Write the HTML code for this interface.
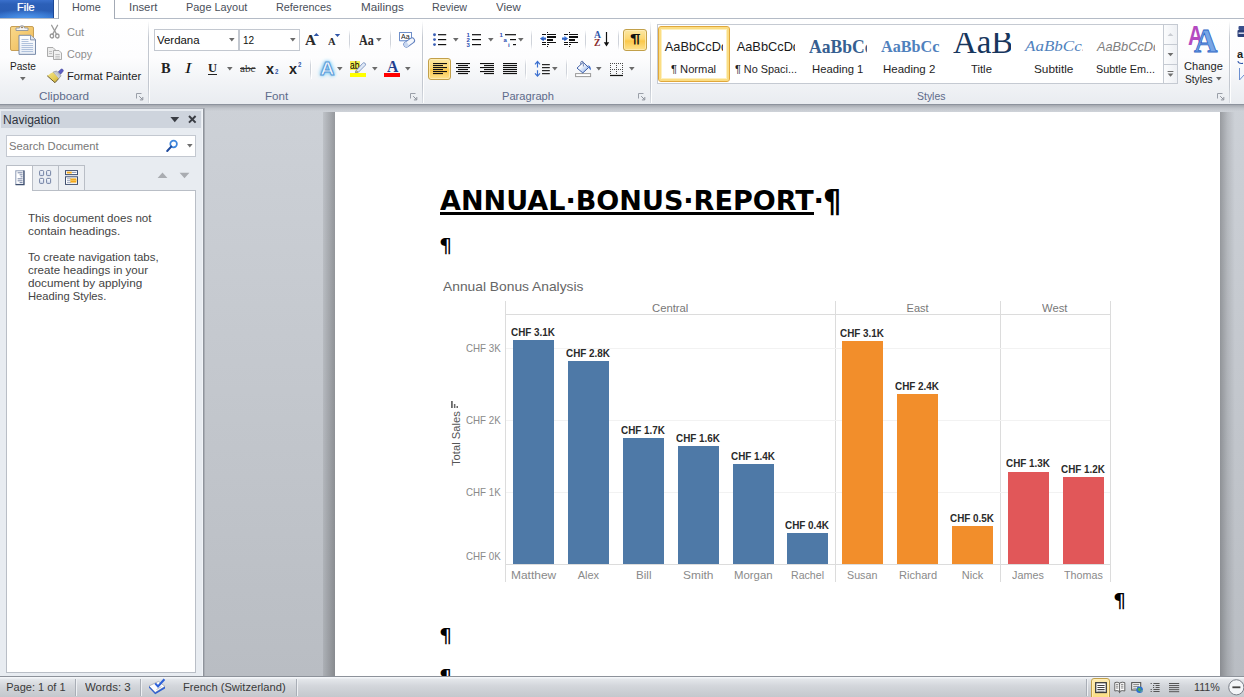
<!DOCTYPE html>
<html lang="en"><head><meta charset="utf-8"><title>Annual Bonus Report - Microsoft Word</title>
<style>
html,body{margin:0;padding:0;}
body{width:1244px;height:697px;overflow:hidden;position:relative;background:#fff;font-family:"Liberation Sans",sans-serif;font-size:12px;}
.t{position:absolute;white-space:pre;line-height:1;transform-origin:0 0;}
.a{position:absolute;}
svg{position:absolute;overflow:visible;}
#tabs{left:0;top:0;width:1244px;height:19px;background:#fff;}
#ribbon{left:0;top:19px;width:1244px;height:85px;background:linear-gradient(#ffffff 0%,#fdfdfe 45%,#f1f3f6 75%,#e9ecf0 100%);border-bottom:1px solid #8d939d;}
#gap{left:0;top:105px;width:1244px;height:6px;background:linear-gradient(#a4a8af 0,#bfc3c9 3px,rgba(204,208,214,0) 6px);}
#work{left:0;top:105px;width:1244px;height:571px;background:linear-gradient(#cdd1d7,#b9bdc3);}
#nav{left:0;top:108px;width:203px;height:568px;background:#e8ecf1;border-top:1px solid #aeb3bb;border-right:1px solid #8f949c;box-sizing:content-box;box-shadow:inset -1px 0 0 #f1f4f8, 1px 0 0 #a9adb4;}
#page{left:335px;top:112px;width:885px;height:564px;background:#fff;}
#status{left:0;top:676px;width:1244px;height:21px;background:linear-gradient(#f4f6f9 0,#f4f6f9 1px,#e4e7eb 2px,#d3d6db 9px,#c4c8cd 100%);border-top:1px solid #8d929a;box-sizing:border-box;}
.gsep{width:1px;top:21px;height:82px;background:linear-gradient(rgba(190,196,205,0),#c3c8d0 20%,#c3c8d0 80%,rgba(190,196,205,.4));box-shadow:1px 0 0 rgba(255,255,255,.9);}
.bsep{width:1px;height:20px;background:linear-gradient(rgba(200,204,212,0),#cfd3da 30%,#cfd3da 70%,rgba(200,204,212,0));box-shadow:1px 0 0 #fff;}
.hot{border:1px solid #c2a04a;border-radius:3px;background:linear-gradient(#fbe7a4 0,#fdd770 45%,#fbc84b 55%,#fde28e 100%);box-sizing:border-box;box-shadow:inset 0 0 0 1px rgba(255,240,190,.7);}
.arr{width:0;height:0;border-left:3px solid transparent;border-right:3px solid transparent;border-top:3.5px solid #6e6e6e;}
.ssep{width:1px;top:679px;height:17px;background:#a9aeb6;box-shadow:1px 0 0 #eef0f3;}
</style></head><body>

<div id="tabs" class="a">
<div class="a" style="left:0;top:18px;width:1244px;height:1px;background:#b4bbc6"></div>
<div class="a" style="left:0;top:0;width:53px;height:18px;background:radial-gradient(ellipse 65% 55% at 50% 105%,#4f98ee 0,rgba(79,152,238,0) 100%),linear-gradient(#3a70cc 0,#2c60b8 22%,#2a5db4 60%,#3473cf 100%);border-right:1px solid #1d4896;"></div>
<div class="a" style="left:58px;top:-4px;width:55px;height:23px;background:#fff;border:1px solid #a3aab5;border-bottom:none;border-radius:3px 3px 0 0;box-sizing:content-box"></div>
</div>
<span class="t" style="left:17.0px;top:1.9px;font-size:11px;color:#fff;text-shadow:0 0 .7px rgba(255,255,255,.85);">File</span>
<span class="t" style="left:71.6px;top:2.0px;font-size:11px;color:#4a4f5a;transform:scaleX(0.981);">Home</span>
<span class="t" style="left:129.2px;top:2.0px;font-size:11px;color:#4a4f5a;transform:scaleX(1.029);">Insert</span>
<span class="t" style="left:186.4px;top:2.0px;font-size:11px;color:#4a4f5a;transform:scaleX(0.991);">Page Layout</span>
<span class="t" style="left:276.2px;top:2.0px;font-size:11px;color:#4a4f5a;transform:scaleX(0.985);">References</span>
<span class="t" style="left:360.6px;top:2.0px;font-size:11px;color:#4a4f5a;transform:scaleX(1.060);">Mailings</span>
<span class="t" style="left:432.4px;top:2.0px;font-size:11px;color:#4a4f5a;transform:scaleX(0.973);">Review</span>
<span class="t" style="left:496.3px;top:2.0px;font-size:11px;color:#4a4f5a;transform:scaleX(1.044);">View</span>
<div id="ribbon" class="a"></div>
<div class="a gsep" style="left:147.5px"></div>
<div class="a gsep" style="left:422px"></div>
<div class="a gsep" style="left:650px"></div>
<div class="a gsep" style="left:1229px"></div>
<span class="t" style="left:38.7px;top:91.2px;font-size:11px;color:#5d6b8a;transform:scaleX(1.064);">Clipboard</span>
<span class="t" style="left:264.8px;top:91.2px;font-size:11px;color:#5d6b8a;transform:scaleX(1.054);">Font</span>
<span class="t" style="left:501.6px;top:91.2px;font-size:11px;color:#5d6b8a;transform:scaleX(1.012);">Paragraph</span>
<span class="t" style="left:916.5px;top:91.2px;font-size:11px;color:#5d6b8a;transform:scaleX(0.951);">Styles</span>
<span class="t" style="left:9.7px;top:60.6px;font-size:11px;color:#1e1e1e;transform:scaleX(0.917);">Paste</span>
<span class="t" style="left:66.7px;top:27.0px;font-size:11px;color:#8e8e8e;transform:scaleX(1.004);">Cut</span>
<span class="t" style="left:66.7px;top:49.0px;font-size:11px;color:#8e8e8e;transform:scaleX(0.981);">Copy</span>
<span class="t" style="left:66.5px;top:70.8px;font-size:11px;color:#1e1e1e;transform:scaleX(1.020);">Format Painter</span>
<div class="a" style="left:154px;top:29px;width:85px;height:22px;border:1px solid #c3c8d0;box-sizing:border-box;background:#fff"></div>
<div class="a" style="left:239px;top:29px;width:61px;height:22px;border:1px solid #c3c8d0;border-left:1px solid #c3c8d0;box-sizing:border-box;background:#fff"></div>
<span class="t" style="left:156.8px;top:34.5px;font-size:11px;color:#111;transform:scaleX(1.039);">Verdana</span>
<span class="t" style="left:242.9px;top:34.5px;font-size:11px;color:#111;transform:scaleX(0.914);">12</span>
<svg style="left:9px;top:23px" width="28" height="32" viewBox="0 0 28 32">
<defs><linearGradient id="pb" x1="0" y1="0" x2="1" y2="1"><stop offset="0" stop-color="#f9d98c"/><stop offset="1" stop-color="#eeb955"/></linearGradient>
<linearGradient id="pp" x1="0" y1="0" x2="0" y2="1"><stop offset="0" stop-color="#ffffff"/><stop offset="1" stop-color="#e6ecf5"/></linearGradient></defs>
<rect x="1.5" y="3.5" width="23" height="24" rx="1.5" fill="url(#pb)" stroke="#c79f56"/>
<path d="M7 7.5 v-2.5 h3.5 a2.5 2.3 0 0 1 5 0 h3.5 v2.5 z" fill="#f4f5f7" stroke="#8e949d" stroke-width=".9"/>
<circle cx="13" cy="4.3" r=".9" fill="#8a6a3a"/>
<path d="M10 12.5 h11.5 l5 5 v18 h-16.5 z" transform="scale(1 .83) translate(0 2.3)" fill="url(#pp)" stroke="#6f82a3" stroke-width="1"/>
<path d="M21.5 12.3 v4.6 h5" fill="#dfe6f0" stroke="#6f82a3" stroke-width=".8"/>
<g stroke="#a8bbd8" stroke-width=".9"><path d="M12.5 16.5h7M12.5 18.5h7M12.5 20.5h11.5M12.5 22.5h11.5M12.5 24.5h11.5M12.5 26.5h11.5M12.5 28.5h11.5"/></g>
</svg>
<svg style="left:49px;top:24px" width="12" height="16" viewBox="0 0 12 16">
<g fill="none" stroke="#9a9a9a" stroke-width="1.3" stroke-linecap="round">
<path d="M2.6 1.2 L7.6 10.4"/><path d="M8.6 1.2 L3.6 10.4"/>
<ellipse cx="2.9" cy="12" rx="1.7" ry="2" /><ellipse cx="8.3" cy="12" rx="1.7" ry="2"/></g>
</svg>
<svg style="left:46px;top:46px" width="18" height="15" viewBox="0 0 18 15">
<g stroke="#a3a3a3" stroke-width=".9" fill="#ececec">
<path d="M1.5 1.5 h5.5 l2.5 2.5 v6.5 h-8 z"/>
<path d="M7.5 4.5 h5.5 l2.5 2.5 v6.5 h-8 z" fill="#f2f2f2"/></g>
<g stroke="#b5b5b5" stroke-width=".8"><path d="M3 5.5h3M3 7.5h3M9.3 8.5h4.5M9.3 10.3h4.5M9.3 12h4.5"/></g>
</svg>
<svg style="left:46px;top:68px" width="18" height="16" viewBox="0 0 18 16">
<defs><linearGradient id="fb" x1="0" y1="0" x2="1" y2="1"><stop offset="0" stop-color="#f3e48a"/><stop offset=".6" stop-color="#e4cc55"/><stop offset="1" stop-color="#c9a93a"/></linearGradient></defs>
<path d="M12.2 4 L14.9 1.3 a1.5 1.5 0 0 1 2.2 1.9 L14.6 6.2 z" fill="#5a5cc4" stroke="#3c3e93" stroke-width=".6"/>
<path d="M7 4.2 L10.6 3 L15 7.8 L12.6 10.6 z" fill="#d5d8de" stroke="#80858f" stroke-width=".7"/>
<path d="M8.6 3.9 L13.8 9.2 M9.8 3.4 L14.6 8.4" stroke="#9aa0ab" stroke-width=".5"/>
<path d="M1.2 7.6 Q3 6.8 4.4 5.4 L7 4.3 L12.6 10.6 L9 14.6 Z" fill="url(#fb)"/>
<path d="M1.2 7.8 L9 14.7 L12.7 10.6" fill="none" stroke="#5a4a1a" stroke-width=".9"/>
</svg>
<svg style="left:20px;top:77.2px" width="6" height="4" viewBox="0 0 6 4"><path d="M0 0 H5.6 L2.8 3.4z" fill="#6a6a6a"/></svg>
<svg style="left:229px;top:38px" width="6" height="4" viewBox="0 0 6 4"><path d="M0 0 H5.6 L2.8 3.4z" fill="#6a6a6a"/></svg>
<svg style="left:290px;top:38px" width="6" height="4" viewBox="0 0 6 4"><path d="M0 0 H5.6 L2.8 3.4z" fill="#6a6a6a"/></svg>
<span class="t" style="left:305.0px;top:32.2px;font-size:15.5px;color:#2b2b2b;font-family:'Liberation Serif', serif;font-weight:700;transform:scaleX(0.982);">A</span>
<svg style="left:313px;top:32px" width="7" height="5" viewBox="0 0 7 5"><path d="M.6 3.9 L3.4 .9 L6.2 3.9z" fill="#2f55a8"/></svg>
<span class="t" style="left:328.0px;top:36.0px;font-size:11px;color:#2b2b2b;font-family:'Liberation Serif', serif;font-weight:700;transform:scaleX(0.956);">A</span>
<svg style="left:334px;top:33px" width="7" height="5" viewBox="0 0 7 5"><path d="M.8 1.1 L6.2 1.1 L3.5 4z" fill="#2f55a8"/></svg>
<div class="a bsep" style="left:349px;top:30px"></div>
<span class="t" style="left:358.6px;top:32.2px;font-size:15.5px;color:#2b2b2b;font-family:'Liberation Serif', serif;font-weight:700;transform:scaleX(0.776);">Aa</span>
<svg style="left:376px;top:38px" width="6" height="4" viewBox="0 0 6 4"><path d="M0 0 H5.6 L2.8 3.4z" fill="#6a6a6a"/></svg>
<div class="a bsep" style="left:390px;top:30px"></div>
<svg style="left:398px;top:31px" width="19" height="18" viewBox="0 0 19 18">
<rect x="1.5" y="1.5" width="12" height="8" fill="#fff" stroke="#6f8fc9" stroke-width="1"/>
<path d="M1.5 9.5 h12 v1 h-12z" fill="#9db7e3"/>
<g transform="translate(11.2 11.5) rotate(-36)"><rect x="-6" y="-2.6" width="12" height="5.2" rx="2.6" fill="#f4f7fc" stroke="#5f7fbf" stroke-width="1"/><path d="M-6 -.2 a2.6 2.6 0 0 0 2.6 2.8 h1.6 v-5.2 h-1.6 a2.6 2.6 0 0 0 -2.6 2.4z" fill="#c8d7f0"/></g>
</svg>
<span class="t" style="left:401.3px;top:32.5px;font-size:8px;color:#222;transform:scaleX(0.878);">Aa</span>
<span class="t" style="left:160.8px;top:61.1px;font-size:14.5px;color:#222;font-family:'Liberation Serif', serif;font-weight:700;transform:scaleX(0.993);">B</span>
<span class="t" style="left:185.2px;top:61.1px;font-size:14.5px;color:#111;font-family:'Liberation Serif', serif;font-style:italic;transform:scaleX(1.321);">I</span>
<span class="t" style="left:207.8px;top:61.3px;font-size:13.5px;color:#222;font-family:'Liberation Serif', serif;font-weight:700;transform:scaleX(0.923);">U</span>
<div class="a" style="left:208px;top:74px;width:9px;height:1px;background:#222"></div>
<svg style="left:227px;top:67px" width="6" height="4" viewBox="0 0 6 4"><path d="M0 0 H5.6 L2.8 3.4z" fill="#6a6a6a"/></svg>
<span class="t" style="left:240.0px;top:63.4px;font-size:11px;color:#333;font-family:'Liberation Serif', serif;transform:scaleX(1.022);text-decoration:line-through;">abc</span>
<span class="t" style="left:266.0px;top:60.5px;font-size:15px;color:#222;font-weight:700;transform:scaleX(0.959);">x</span>
<span class="t" style="left:275.0px;top:69.0px;font-size:6.5px;color:#2f55a8;font-weight:700;transform:scaleX(0.938);">2</span>
<span class="t" style="left:288.8px;top:60.5px;font-size:15px;color:#222;font-weight:700;transform:scaleX(0.959);">x</span>
<span class="t" style="left:297.8px;top:61.5px;font-size:6.5px;color:#2f55a8;font-weight:700;transform:scaleX(0.938);">2</span>
<div class="a bsep" style="left:310px;top:59px"></div>
<span class="t" style="left:319.6px;top:59.2px;font-size:19px;font-weight:700;color:#f2f8fe;-webkit-text-stroke:.9px #5b9ad8;text-shadow:0 0 2px #6fc0f0,0 0 3px #7cc6f2,0 0 4px #8fd3f7,0 0 5px #9ad8f8;transform:scaleX(1.06)">A</span>
<svg style="left:337px;top:67px" width="6" height="4" viewBox="0 0 6 4"><path d="M0 0 H5.6 L2.8 3.4z" fill="#6a6a6a"/></svg>
<div class="a" style="left:350px;top:61px;width:10px;height:9px;background:#f5ef52"></div>
<span class="t" style="left:350.3px;top:60.5px;font-size:10px;color:#000;transform:scaleX(0.845);">ab</span>
<svg style="left:353px;top:61px" width="14" height="12" viewBox="0 0 14 12">
<path d="M3 9.6 L9.6 2.4 a1.6 1.6 0 0 1 2.6 2 L5.4 11.2 L2.4 11.6z" fill="#dfe8f6" stroke="#6b86b8" stroke-width=".8"/>
<path d="M2.6 11.5 L3.2 9.7 L5.2 11z" fill="#e9d89a" stroke="#8a7a40" stroke-width=".5"/></svg>
<div class="a" style="left:350px;top:73px;width:16px;height:4px;background:#ffff00"></div>
<svg style="left:372px;top:67px" width="6" height="4" viewBox="0 0 6 4"><path d="M0 0 H5.6 L2.8 3.4z" fill="#6a6a6a"/></svg>
<span class="t" style="left:386.6px;top:58.6px;font-size:16px;color:#1f3f8f;font-family:'Liberation Serif', serif;font-weight:700;transform:scaleX(0.986);">A</span>
<div class="a" style="left:384px;top:73px;width:16px;height:4px;background:#ff0000"></div>
<svg style="left:405px;top:67px" width="6" height="4" viewBox="0 0 6 4"><path d="M0 0 H5.6 L2.8 3.4z" fill="#6a6a6a"/></svg>
<svg style="left:432px;top:32px" width="16" height="15" viewBox="0 0 16 15">
<g fill="#3a5fb5"><circle cx="2.5" cy="2.7" r="1.45"/><circle cx="2.5" cy="7.6" r="1.45"/><circle cx="2.5" cy="12.6" r="1.45"/></g>
<g fill="#111"><rect x="6" y="2.1" width="8.2" height="1.2"/><rect x="6" y="7" width="8.2" height="1.2"/><rect x="6" y="12" width="8.2" height="1.2"/></g></svg>
<svg style="left:453px;top:38px" width="6" height="4" viewBox="0 0 6 4"><path d="M0 0 H5.6 L2.8 3.4z" fill="#6a6a6a"/></svg>
<svg style="left:466px;top:32px" width="16" height="15" viewBox="0 0 16 15">
<g font-family="Liberation Sans, sans-serif" font-weight="700" font-size="6" fill="#2a4db0"><text x=".6" y="4.6">1</text><text x=".6" y="9.6">2</text><text x=".6" y="14.6">3</text></g>
<g fill="#111"><rect x="6" y="2.1" width="9" height="1.2"/><rect x="6" y="7" width="9" height="1.2"/><rect x="6" y="12" width="9" height="1.2"/></g></svg>
<svg style="left:488px;top:38px" width="6" height="4" viewBox="0 0 6 4"><path d="M0 0 H5.6 L2.8 3.4z" fill="#6a6a6a"/></svg>
<svg style="left:499px;top:32px" width="18" height="16" viewBox="0 0 18 16">
<g font-family="Liberation Sans, sans-serif" font-weight="700" font-size="6" fill="#2a4db0"><text x=".6" y="4.8">1</text><text x="4.6" y="9.6">a</text><text x="9" y="14.8">i</text></g>
<g fill="#111"><rect x="6" y="2.1" width="11" height="1.2"/><rect x="11" y="7" width="6" height="1.2"/><rect x="14" y="12" width="3" height="1.2"/></g></svg>
<svg style="left:518px;top:38px" width="6" height="4" viewBox="0 0 6 4"><path d="M0 0 H5.6 L2.8 3.4z" fill="#6a6a6a"/></svg>
<div class="a bsep" style="left:531px;top:30px"></div>
<svg style="left:540px;top:32px" width="17" height="15" viewBox="0 0 17 15">
<g fill="#111"><rect x="7" y="0" width="1" height="1"/><rect x="7" y="14" width="1" height="1"/>
<rect x="2" y="2" width="4" height="1"/><rect x="7" y="2" width="9" height="1"/>
<rect x="7" y="4" width="9" height="2"/><rect x="7" y="7" width="6" height="2"/>
<rect x="2" y="10" width="4" height="1"/><rect x="7" y="10" width="9" height="1"/>
<rect x="2" y="12" width="4" height="1"/><rect x="7" y="12" width="2" height="1"/></g>
<path d="M0 6.5 L3.6 3.9 V5.6 H6 V7.4 H3.6 V9.1z" fill="#3f7be0"/><path d="M0 6.5 L3.6 9.1 V7.4 H6 V6.5z" fill="#2a55b0"/></svg>
<svg style="left:562px;top:32px" width="17" height="15" viewBox="0 0 17 15">
<g fill="#111"><rect x="7" y="0" width="1" height="1"/><rect x="7" y="14" width="1" height="1"/>
<rect x="2" y="2" width="4" height="1"/><rect x="7" y="2" width="9" height="1"/>
<rect x="7" y="4" width="9" height="2"/><rect x="7" y="7" width="6" height="2"/>
<rect x="2" y="10" width="4" height="1"/><rect x="7" y="10" width="9" height="1"/>
<rect x="2" y="12" width="4" height="1"/><rect x="7" y="12" width="2" height="1"/></g>
<path d="M6 6.5 L2.4 3.9 V5.6 H0 V7.4 H2.4 V9.1z" fill="#3f7be0"/><path d="M6 6.5 L2.4 9.1 V7.4 H0 V6.5z" fill="#2a55b0"/></svg>
<div class="a bsep" style="left:585px;top:30px"></div>
<span class="t" style="left:594.0px;top:30.7px;font-size:9.5px;color:#2f55a8;font-family:'Liberation Serif', serif;font-weight:700;transform:scaleX(1.018);">A</span>
<span class="t" style="left:594.4px;top:38.8px;font-size:9.5px;color:#8b2c2c;font-family:'Liberation Serif', serif;font-weight:700;transform:scaleX(1.009);">Z</span>
<svg style="left:603px;top:31px" width="8" height="17" viewBox="0 0 8 17"><path d="M3.5 1 v13" stroke="#111" stroke-width="1.2"/><path d="M.8 11.2 L3.5 15.4 L6.2 11.2z" fill="#111"/></svg>
<div class="a bsep" style="left:618px;top:30px"></div>
<div class="a hot" style="left:623px;top:29px;width:24px;height:22px"></div>
<span class="t" style="left:629.6px;top:32.2px;font-size:13.5px;color:#111;font-weight:700;transform:scaleX(1.410);">¶</span>
<div class="a hot" style="left:428px;top:58px;width:23px;height:22px"></div>
<svg style="left:433px;top:62px" width="14" height="13" viewBox="0 0 14 13"><g fill="#111"><rect x="0" y="1" width="14" height="1.1"/><rect x="0" y="3" width="10" height="1.1"/><rect x="0" y="5" width="14" height="1.1"/><rect x="0" y="7" width="10" height="1.1"/><rect x="0" y="9" width="14" height="1.1"/><rect x="0" y="11" width="10" height="1.1"/></g></svg>
<svg style="left:456px;top:62px" width="14" height="13" viewBox="0 0 14 13"><g fill="#111"><rect x="0" y="1" width="14" height="1.1"/><rect x="2" y="3" width="10" height="1.1"/><rect x="0" y="5" width="14" height="1.1"/><rect x="2" y="7" width="10" height="1.1"/><rect x="0" y="9" width="14" height="1.1"/><rect x="2" y="11" width="10" height="1.1"/></g></svg>
<svg style="left:480px;top:62px" width="14" height="13" viewBox="0 0 14 13"><g fill="#111"><rect x="0" y="1" width="14" height="1.1"/><rect x="4" y="3" width="10" height="1.1"/><rect x="0" y="5" width="14" height="1.1"/><rect x="4" y="7" width="10" height="1.1"/><rect x="0" y="9" width="14" height="1.1"/><rect x="4" y="11" width="10" height="1.1"/></g></svg>
<svg style="left:503px;top:62px" width="14" height="13" viewBox="0 0 14 13"><g fill="#111"><rect x="0" y="1" width="14" height="1.1"/><rect x="0" y="3" width="14" height="1.1"/><rect x="0" y="5" width="14" height="1.1"/><rect x="0" y="7" width="14" height="1.1"/><rect x="0" y="9" width="14" height="1.1"/><rect x="0" y="11" width="14" height="1.1"/></g></svg>
<div class="a bsep" style="left:525px;top:59px"></div>
<svg style="left:534px;top:60px" width="17" height="18" viewBox="0 0 17 18">
<g fill="none" stroke="#3a6fd0" stroke-width="1.2"><path d="M3.5 1.8 v5.6 M3.5 10.2 v5.6"/><path d="M1 4.3 L3.5 1.5 L6 4.3"/><path d="M1 13.3 L3.5 16.1 L6 13.3"/></g>
<g fill="#111"><rect x="8" y="4.1" width="7.8" height="1.1"/><rect x="8" y="7.1" width="7.8" height="1.1"/><rect x="8" y="10.1" width="7.8" height="1.1"/><rect x="8" y="13.1" width="7.8" height="1.1"/></g></svg>
<svg style="left:552px;top:67px" width="6" height="4" viewBox="0 0 6 4"><path d="M0 0 H5.6 L2.8 3.4z" fill="#6a6a6a"/></svg>
<div class="a bsep" style="left:566px;top:59px"></div>
<svg style="left:574px;top:60px" width="19" height="18" viewBox="0 0 19 18">
<defs><linearGradient id="bk" x1="0" y1="0" x2="1" y2="1"><stop offset=".35" stop-color="#ffffff"/><stop offset="1" stop-color="#7fa6e6"/></linearGradient></defs>
<rect x="1.6" y="13.6" width="15" height="3" fill="#fff" stroke="#9a9a9a" stroke-width="1"/>
<path d="M9.2 2.3 L14.6 7.5 L8.8 12.9 L3 8.1z" fill="url(#bk)" stroke="#2b4f9f" stroke-width=".9"/>
<path d="M6.6 4.6 Q6.4 .9 8.2 1 Q9.6 1.2 9.4 6.4" fill="none" stroke="#5f76a8" stroke-width=".9"/>
<path d="M13.6 5.2 Q17.2 5.6 16.8 10.2 Q14.8 9 15 7z" fill="#2f60c8"/></svg>
<svg style="left:596px;top:67px" width="6" height="4" viewBox="0 0 6 4"><path d="M0 0 H5.6 L2.8 3.4z" fill="#6a6a6a"/></svg>
<svg style="left:609px;top:62px" width="16" height="15" viewBox="0 0 16 15"><g fill="#4a4a4a"><rect x="1" y="1" width="1" height="1"/><rect x="1" y="3" width="1" height="1"/><rect x="1" y="5" width="1" height="1"/><rect x="1" y="7" width="1" height="1"/><rect x="1" y="9" width="1" height="1"/><rect x="1" y="11" width="1" height="1"/><rect x="3" y="1" width="1" height="1"/><rect x="3" y="7" width="1" height="1"/><rect x="5" y="1" width="1" height="1"/><rect x="5" y="7" width="1" height="1"/><rect x="7" y="1" width="1" height="1"/><rect x="7" y="3" width="1" height="1"/><rect x="7" y="5" width="1" height="1"/><rect x="7" y="7" width="1" height="1"/><rect x="7" y="9" width="1" height="1"/><rect x="7" y="11" width="1" height="1"/><rect x="9" y="1" width="1" height="1"/><rect x="9" y="7" width="1" height="1"/><rect x="11" y="1" width="1" height="1"/><rect x="11" y="7" width="1" height="1"/><rect x="13" y="1" width="1" height="1"/><rect x="13" y="3" width="1" height="1"/><rect x="13" y="5" width="1" height="1"/><rect x="13" y="7" width="1" height="1"/><rect x="13" y="9" width="1" height="1"/><rect x="13" y="11" width="1" height="1"/></g><rect x="1" y="12.9" width="13" height="1.2" fill="#111"/></svg>
<svg style="left:629px;top:67px" width="6" height="4" viewBox="0 0 6 4"><path d="M0 0 H5.6 L2.8 3.4z" fill="#6a6a6a"/></svg>
<svg style="left:136px;top:93px" width="8" height="8" viewBox="0 0 8 8"><path d="M.5 5.5 v-5 h5" fill="none" stroke="#9a9fa8" stroke-width="1"/><path d="M3.2 3.2 L6.6 6.6 M6.8 4 v2.9 h-2.9" fill="none" stroke="#8d929b" stroke-width="1"/></svg>
<svg style="left:410px;top:93px" width="8" height="8" viewBox="0 0 8 8"><path d="M.5 5.5 v-5 h5" fill="none" stroke="#9a9fa8" stroke-width="1"/><path d="M3.2 3.2 L6.6 6.6 M6.8 4 v2.9 h-2.9" fill="none" stroke="#8d929b" stroke-width="1"/></svg>
<svg style="left:638px;top:93px" width="8" height="8" viewBox="0 0 8 8"><path d="M.5 5.5 v-5 h5" fill="none" stroke="#9a9fa8" stroke-width="1"/><path d="M3.2 3.2 L6.6 6.6 M6.8 4 v2.9 h-2.9" fill="none" stroke="#8d929b" stroke-width="1"/></svg>
<svg style="left:1217px;top:93px" width="8" height="8" viewBox="0 0 8 8"><path d="M.5 5.5 v-5 h5" fill="none" stroke="#9a9fa8" stroke-width="1"/><path d="M3.2 3.2 L6.6 6.6 M6.8 4 v2.9 h-2.9" fill="none" stroke="#8d929b" stroke-width="1"/></svg>
<div class="a" style="left:657px;top:24px;width:521px;height:60px;border:1px solid #c5cad2;box-sizing:border-box;background:#fff"></div>
<div class="a" style="left:658px;top:26px;width:72px;height:56px;border-radius:3px;border:1px solid #e0a83c;box-sizing:border-box;background:#fff;box-shadow:inset 0 0 0 2px #fbdd83, inset 0 0 0 3px #fdf0c0"></div>
<div class="a" style="left:662px;top:30px;width:61.2px;height:30px;overflow:hidden">
<span class="t" style="left:2.8px;top:11.0px;font-size:12.8px;color:#1a1a1a;">AaBbCcDd</span>
</div>
<span class="t" style="left:670.7px;top:64.2px;font-size:11px;color:#1e1e1e;transform:scaleX(1.015);">¶ Normal</span>
<div class="a" style="left:734px;top:30px;width:61.4px;height:30px;overflow:hidden">
<span class="t" style="left:2.7px;top:11.0px;font-size:12.8px;color:#1a1a1a;">AaBbCcDd</span>
</div>
<span class="t" style="left:734.5px;top:64.2px;font-size:11px;color:#1e1e1e;transform:scaleX(0.988);">¶ No Spaci...</span>
<div class="a" style="left:806px;top:30px;width:61.2px;height:30px;overflow:hidden">
<span class="t" style="left:3.0px;top:6.7px;font-size:19px;color:#365f91;font-family:'Liberation Serif', serif;font-weight:700;transform:scaleX(0.925);">AaBbCc</span>
</div>
<span class="t" style="left:811.5px;top:64.2px;font-size:11px;color:#1e1e1e;transform:scaleX(1.023);">Heading 1</span>
<div class="a" style="left:878px;top:30px;width:62px;height:30px;overflow:hidden">
<span class="t" style="left:2.8px;top:9.3px;font-size:16px;color:#4f81bd;font-family:'Liberation Serif', serif;font-weight:700;transform:scaleX(1.011);">AaBbCc</span>
</div>
<span class="t" style="left:883.4px;top:64.2px;font-size:11px;color:#1e1e1e;transform:scaleX(1.043);">Heading 2</span>
<div class="a" style="left:950px;top:33px;width:60.6px;height:27px;overflow:hidden">
<span class="t" style="left:3.0px;top:-8.5px;font-size:33.5px;color:#17365d;font-family:'Liberation Serif', serif;transform:scaleX(0.979);">AaBb</span>
</div>
<span class="t" style="left:971.0px;top:64.2px;font-size:11px;color:#1e1e1e;transform:scaleX(1.026);">Title</span>
<div class="a" style="left:1022px;top:30px;width:61.2px;height:30px;overflow:hidden">
<span class="t" style="left:2.5px;top:9.1px;font-size:15px;color:#4f81bd;font-family:'Liberation Serif', serif;font-style:italic;transform:scaleX(1.135);">AaBbCc.</span>
</div>
<span class="t" style="left:1034.2px;top:64.2px;font-size:11px;color:#1e1e1e;transform:scaleX(1.073);">Subtitle</span>
<div class="a" style="left:1094px;top:30px;width:61.2px;height:30px;overflow:hidden">
<span class="t" style="left:2.9px;top:11.0px;font-size:12.8px;color:#808080;font-style:italic;">AaBbCcDd</span>
</div>
<span class="t" style="left:1096.4px;top:64.2px;font-size:11px;color:#1e1e1e;transform:scaleX(0.985);">Subtle Em...</span>
<div class="a" style="left:1163px;top:24px;width:15px;height:60px;box-sizing:border-box;border:1px solid #c5cad2;background:linear-gradient(90deg,#fbfcfd,#eef0f4)"></div>
<div class="a" style="left:1163px;top:44px;width:15px;height:1px;background:#c5cad2"></div>
<div class="a" style="left:1163px;top:64px;width:15px;height:1px;background:#c5cad2"></div>
<svg style="left:1167px;top:32px" width="7" height="5" viewBox="0 0 7 5"><path d="M.6 4 L3.5 1 L6.4 4z" fill="#c9ccd2"/></svg>
<svg style="left:1167px;top:52px" width="7" height="5" viewBox="0 0 7 5"><path d="M.6 1 L6.4 1 L3.5 4.2z" fill="#6e6e6e"/></svg>
<svg style="left:1167px;top:70px" width="7" height="8" viewBox="0 0 7 8"><path d="M.6 1.5 h5.8" stroke="#6e6e6e" stroke-width="1"/><path d="M.6 3.6 L6.4 3.6 L3.5 6.8z" fill="#6e6e6e"/></svg>
<span class="t" style="left:1187.5px;top:22.9px;font-size:27px;color:#b44ac0;font-weight:700;transform:scaleX(0.769);">A</span>
<span class="t" style="left:1194.0px;top:24.3px;font-size:34px;color:#77a6e6;font-family:'Liberation Serif', serif;font-weight:700;transform:scaleX(0.957);-webkit-text-stroke:.8px #2f66c6;">A</span>
<span class="t" style="left:1183.8px;top:61.4px;font-size:11px;color:#1e1e1e;transform:scaleX(1.007);">Change</span>
<span class="t" style="left:1184.5px;top:73.7px;font-size:11px;color:#1e1e1e;transform:scaleX(0.924);">Styles</span>
<svg style="left:1216px;top:76.8px" width="6" height="4" viewBox="0 0 6 4"><path d="M0 0 H5.6 L2.8 3.4z" fill="#6a6a6a"/></svg>
<svg style="left:1236px;top:24px" width="8" height="60" viewBox="0 0 8 60">
<rect x="2.5" y="2" width="6" height="4" rx="1" fill="#3a4f8c"/><rect x="1.5" y="6" width="7" height="7" rx="1" fill="#2c3f78"/><rect x="2.5" y="8.5" width="6" height="1.4" fill="#dfe6f5"/>
<text x="1" y="34" font-family="Liberation Sans, sans-serif" font-size="11" font-weight="700" fill="#222">a</text>
<path d="M2 37 q0 3 5 2.4" fill="none" stroke="#2f55a8" stroke-width="1.1"/>
<path d="M3.5 44 v12 L8 51" fill="#f4f7fc" stroke="#6b8fd0" stroke-width="1"/></svg>
<div id="work" class="a"></div>
<div id="gap" class="a"></div>
<div class="a" style="left:323px;top:112px;width:12px;height:564px;background:linear-gradient(90deg,rgba(0,0,0,.07),rgba(0,0,0,.27))"></div>
<div class="a" style="left:1220px;top:112px;width:15px;height:564px;background:linear-gradient(90deg,rgba(0,0,0,.26),rgba(0,0,0,.1) 50%,rgba(0,0,0,0))"></div>
<div id="page" class="a"></div>
<span class="t" style="left:440.3px;top:186.8px;font-size:27.4px;color:#000;font-family:'DejaVu Sans', 'Liberation Sans', sans-serif;font-weight:700;transform:scaleX(0.987);">ANNUAL·BONUS·REPORT</span>
<div class="a" style="left:440px;top:212px;width:374px;height:3px;background:#000"></div>
<span class="t" style="left:813.4px;top:186.8px;font-size:27.4px;color:#000;font-family:'DejaVu Sans', 'Liberation Sans', sans-serif;font-weight:700;">·</span>
<span class="t" style="left:823.2px;top:186.4px;font-size:31.1px;color:#000;font-family:'DejaVu Sans', 'Liberation Sans', sans-serif;font-weight:700;transform:scaleX(0.924);">¶</span>
<span class="t" style="left:439.4px;top:237.2px;font-size:18.8px;color:#000;font-family:'DejaVu Sans', 'Liberation Sans', sans-serif;transform:scaleX(1.104);">¶</span>
<span class="t" style="left:1113.1px;top:592.2px;font-size:18.8px;color:#000;font-family:'DejaVu Sans', 'Liberation Sans', sans-serif;transform:scaleX(1.104);">¶</span>
<span class="t" style="left:439.4px;top:627.4px;font-size:18.8px;color:#000;font-family:'DejaVu Sans', 'Liberation Sans', sans-serif;transform:scaleX(1.104);">¶</span>
<span class="t" style="left:439.4px;top:667.5px;font-size:18.8px;color:#000;font-family:'DejaVu Sans', 'Liberation Sans', sans-serif;transform:scaleX(1.104);">¶</span>
<span class="t" style="left:443.4px;top:280.1px;font-size:13px;color:#666;transform:scaleX(1.062);">Annual Bonus Analysis</span>
<div class="a" style="left:505px;top:301px;width:1px;height:281px;background:#dcdcdc"></div>
<div class="a" style="left:835px;top:301px;width:1px;height:281px;background:#dcdcdc"></div>
<div class="a" style="left:1000px;top:301px;width:1px;height:281px;background:#dcdcdc"></div>
<div class="a" style="left:1110px;top:301px;width:1px;height:281px;background:#dcdcdc"></div>
<div class="a" style="left:506px;top:314px;width:604px;height:1px;background:#dcdcdc"></div>
<div class="a" style="left:506px;top:564px;width:604px;height:1px;background:#dcdcdc"></div>
<div class="a" style="left:506px;top:348px;width:604px;height:1px;background:#f2f2f2"></div>
<div class="a" style="left:506px;top:420px;width:604px;height:1px;background:#f2f2f2"></div>
<div class="a" style="left:506px;top:491.5px;width:604px;height:1px;background:#f2f2f2"></div>
<span class="t" style="left:652.2px;top:302.8px;font-size:11px;color:#787878;transform:scaleX(1.026);">Central</span>
<span class="t" style="left:906.6px;top:302.8px;font-size:11px;color:#787878;">East</span>
<span class="t" style="left:1042.2px;top:302.8px;font-size:11px;color:#787878;transform:scaleX(1.022);">West</span>
<span class="t" style="left:466.3px;top:343.0px;font-size:11.2px;color:#8a8a8a;transform:scaleX(0.874);">CHF 3K</span>
<span class="t" style="left:466.3px;top:414.8px;font-size:11.2px;color:#8a8a8a;transform:scaleX(0.874);">CHF 2K</span>
<span class="t" style="left:466.3px;top:486.7px;font-size:11.2px;color:#8a8a8a;transform:scaleX(0.874);">CHF 1K</span>
<span class="t" style="left:466.3px;top:551.3px;font-size:11.2px;color:#8a8a8a;transform:scaleX(0.874);">CHF 0K</span>
<span class="t" style="left:450.6px;top:466px;font-size:11px;color:#555;transform:rotate(-90deg) scaleX(1.02);transform-origin:0 0;">Total Sales</span>
<svg style="left:450px;top:400px" width="9" height="9" viewBox="0 0 9 9"><g fill="#6a6a6a"><rect x="1" y="1" width="1.8" height="7"/><rect x="3.9" y="4" width="1.5" height="4"/><rect x="6.5" y="6" width="1.5" height="2"/></g></svg>
<div class="a" style="left:513.0px;top:340.4px;width:41px;height:223.9px;background:#4e79a7"></div>
<span class="t" style="left:511.1px;top:327.1px;font-size:10.5px;color:#2a2a2a;font-weight:700;transform:scaleX(0.942);">CHF 3.1K</span>
<span class="t" style="left:510.9px;top:569.9px;font-size:11px;color:#8a8a8a;transform:scaleX(1.087);">Matthew</span>
<div class="a" style="left:567.9px;top:361.2px;width:41px;height:203.1px;background:#4e79a7"></div>
<span class="t" style="left:566.0px;top:347.9px;font-size:10.5px;color:#2a2a2a;font-weight:700;transform:scaleX(0.942);">CHF 2.8K</span>
<span class="t" style="left:577.7px;top:569.9px;font-size:11px;color:#8a8a8a;">Alex</span>
<div class="a" style="left:622.8px;top:438.0px;width:41px;height:126.3px;background:#4e79a7"></div>
<span class="t" style="left:620.9px;top:424.7px;font-size:10.5px;color:#2a2a2a;font-weight:700;transform:scaleX(0.942);">CHF 1.7K</span>
<span class="t" style="left:635.5px;top:569.9px;font-size:11px;color:#8a8a8a;transform:scaleX(1.056);">Bill</span>
<div class="a" style="left:677.7px;top:446.0px;width:41px;height:118.3px;background:#4e79a7"></div>
<span class="t" style="left:675.8px;top:432.7px;font-size:10.5px;color:#2a2a2a;font-weight:700;transform:scaleX(0.942);">CHF 1.6K</span>
<span class="t" style="left:683.0px;top:569.9px;font-size:11px;color:#8a8a8a;transform:scaleX(1.084);">Smith</span>
<div class="a" style="left:732.6px;top:464.1px;width:41px;height:100.2px;background:#4e79a7"></div>
<span class="t" style="left:730.7px;top:450.8px;font-size:10.5px;color:#2a2a2a;font-weight:700;transform:scaleX(0.942);">CHF 1.4K</span>
<span class="t" style="left:733.8px;top:569.9px;font-size:11px;color:#8a8a8a;transform:scaleX(1.035);">Morgan</span>
<div class="a" style="left:787.2px;top:532.8px;width:41px;height:31.5px;background:#4e79a7"></div>
<span class="t" style="left:785.3px;top:519.5px;font-size:10.5px;color:#2a2a2a;font-weight:700;transform:scaleX(0.942);">CHF 0.4K</span>
<span class="t" style="left:791.2px;top:569.9px;font-size:11px;color:#8a8a8a;transform:scaleX(0.964);">Rachel</span>
<div class="a" style="left:842.1px;top:340.9px;width:41px;height:223.4px;background:#f28e2b"></div>
<span class="t" style="left:840.2px;top:327.6px;font-size:10.5px;color:#2a2a2a;font-weight:700;transform:scaleX(0.942);">CHF 3.1K</span>
<span class="t" style="left:847.4px;top:569.9px;font-size:11px;color:#8a8a8a;transform:scaleX(0.974);">Susan</span>
<div class="a" style="left:897.1px;top:393.9px;width:41px;height:170.4px;background:#f28e2b"></div>
<span class="t" style="left:895.2px;top:380.6px;font-size:10.5px;color:#2a2a2a;font-weight:700;transform:scaleX(0.942);">CHF 2.4K</span>
<span class="t" style="left:898.5px;top:569.9px;font-size:11px;color:#8a8a8a;transform:scaleX(1.008);">Richard</span>
<div class="a" style="left:952.0px;top:525.8px;width:41px;height:38.5px;background:#f28e2b"></div>
<span class="t" style="left:950.1px;top:512.5px;font-size:10.5px;color:#2a2a2a;font-weight:700;transform:scaleX(0.942);">CHF 0.5K</span>
<span class="t" style="left:961.8px;top:569.9px;font-size:11px;color:#8a8a8a;">Nick</span>
<div class="a" style="left:1007.8px;top:471.6px;width:41px;height:92.7px;background:#e15759"></div>
<span class="t" style="left:1005.9px;top:458.3px;font-size:10.5px;color:#2a2a2a;font-weight:700;transform:scaleX(0.942);">CHF 1.3K</span>
<span class="t" style="left:1012.4px;top:569.9px;font-size:11px;color:#8a8a8a;transform:scaleX(0.981);">James</span>
<div class="a" style="left:1062.8px;top:477.3px;width:41px;height:87.0px;background:#e15759"></div>
<span class="t" style="left:1060.9px;top:464.0px;font-size:10.5px;color:#2a2a2a;font-weight:700;transform:scaleX(0.942);">CHF 1.2K</span>
<span class="t" style="left:1063.9px;top:569.9px;font-size:11px;color:#8a8a8a;transform:scaleX(0.976);">Thomas</span>
<div id="nav" class="a"></div>
<div class="a" style="left:1px;top:111px;width:200px;height:17px;background:#ced4dd"></div>
<span class="t" style="left:3.4px;top:113.6px;font-size:12.5px;color:#2e3440;transform:scaleX(0.965);">Navigation</span>
<svg style="left:170px;top:116px" width="10" height="7" viewBox="0 0 10 7"><path d="M.4 1 L9.2 1 L4.8 6.2z" fill="#3a3d44"/></svg>
<svg style="left:188px;top:115px" width="9" height="9" viewBox="0 0 9 9"><path d="M1 1 L7.6 7.6 M7.6 1 L1 7.6" stroke="#3a3d44" stroke-width="2"/></svg>
<div class="a" style="left:6px;top:135px;width:190px;height:22px;border:1px solid #c3c8d0;box-sizing:border-box;background:#fff"></div>
<span class="t" style="left:9.3px;top:140.9px;font-size:11px;color:#777;transform:scaleX(1.017);">Search Document</span>
<svg style="left:166px;top:139px" width="13" height="14" viewBox="0 0 13 14"><circle cx="7.6" cy="5" r="3.3" fill="#fff" stroke="#3d86dd" stroke-width="1.7"/><path d="M5.2 7.6 L1.2 12" stroke="#1f4a9c" stroke-width="2" stroke-linecap="round"/></svg>
<svg style="left:186.5px;top:144px" width="6" height="4" viewBox="0 0 6 4"><path d="M0 0 H5.6 L2.8 3.4z" fill="#6e6e6e"/></svg>
<div class="a" style="left:6px;top:190px;width:190px;height:483px;border:1px solid #b9bec6;box-sizing:border-box;background:#fff"></div>
<div class="a" style="left:6px;top:165px;width:27px;height:26px;border:1px solid #b9bec6;border-bottom:none;box-sizing:border-box;background:#fff"></div>
<div class="a" style="left:32px;top:165px;width:27px;height:25px;border:1px solid #b9bec6;border-bottom:none;box-sizing:border-box;background:#eceff3"></div>
<div class="a" style="left:58px;top:165px;width:27px;height:25px;border:1px solid #b9bec6;border-bottom:none;box-sizing:border-box;background:#eceff3"></div>
<svg style="left:14px;top:169px" width="12" height="17" viewBox="0 0 12 17"><rect x="1.8" y="1.8" width="8" height="13.6" fill="#fff" stroke="#8d9bb5" stroke-width="1"/><path d="M10 1.6 V15.6 H1.6" fill="none" stroke="#3f4f6f" stroke-width="1.2"/><path d="M3.6 3.8h5M5.6 5.8h3M6.6 7.8h2M3.6 9.8h5M3.6 11.8h5M5.6 13.6h3" stroke="#66769a" stroke-width=".9"/></svg>
<svg style="left:38px;top:169px" width="14" height="16" viewBox="0 0 14 16"><defs><linearGradient id="sq" x1="0" y1="0" x2="0" y2="1"><stop offset="0" stop-color="#fff"/><stop offset="1" stop-color="#cfdaee"/></linearGradient></defs><g fill="url(#sq)" stroke="#66769a" stroke-width=".9"><rect x="1.6" y="1.6" width="4" height="5" rx=".8"/><rect x="8.6" y="1.6" width="4" height="5" rx=".8"/><rect x="1.6" y="9.4" width="4" height="5" rx=".8"/><rect x="8.6" y="9.4" width="4" height="5" rx=".8"/></g></svg>
<svg style="left:64px;top:169px" width="15" height="17" viewBox="0 0 15 17"><rect x="1.5" y="1.6" width="12" height="4" fill="#fff" stroke="#3f4f6f" stroke-width="1"/><rect x="1.5" y="7.8" width="12" height="7.6" fill="#fff" stroke="#3f4f6f" stroke-width="1"/><rect x="2.8" y="2.7" width="5" height="1.8" fill="#f2a71b"/><rect x="8" y="3.2" width="4.4" height=".8" fill="#7d8aa6"/><path d="M3 9.8h4M3 11.6h3M3 13.4h4" stroke="#8a97b0" stroke-width=".8"/><rect x="6.4" y="9.4" width="6" height="4.2" fill="#f2a71b"/><rect x="6.4" y="10.9" width="6" height="1" fill="#f7c55a"/></svg>
<svg style="left:157px;top:172px" width="11" height="7" viewBox="0 0 11 7"><path d="M.6 6 L5.5 .6 L10.4 6z" fill="#a9acb1"/></svg>
<svg style="left:179px;top:172px" width="11" height="7" viewBox="0 0 11 7"><path d="M.6 .8 L10.4 .8 L5.5 6.2z" fill="#a9acb1"/></svg>
<span class="t" style="left:28.4px;top:213.1px;font-size:11px;color:#444;transform:scaleX(1.052);">This document does not</span>
<span class="t" style="left:28.4px;top:226.1px;font-size:11px;color:#444;transform:scaleX(1.070);">contain headings.</span>
<span class="t" style="left:28.4px;top:252.1px;font-size:11px;color:#444;transform:scaleX(1.042);">To create navigation tabs,</span>
<span class="t" style="left:28.4px;top:265.1px;font-size:11px;color:#444;transform:scaleX(1.050);">create headings in your</span>
<span class="t" style="left:28.4px;top:278.1px;font-size:11px;color:#444;transform:scaleX(1.067);">document by applying</span>
<span class="t" style="left:28.4px;top:291.1px;font-size:11px;color:#444;transform:scaleX(1.016);">Heading Styles.</span>
<div id="status" class="a"></div>
<span class="t" style="left:6.2px;top:681.7px;font-size:11px;color:#3a3a3a;">Page: 1 of 1</span>
<span class="t" style="left:85.2px;top:681.7px;font-size:11px;color:#3a3a3a;transform:scaleX(1.041);">Words: 3</span>
<span class="t" style="left:182.7px;top:681.7px;font-size:11px;color:#3a3a3a;transform:scaleX(1.011);">French (Switzerland)</span>
<div class="a ssep" style="left:75px"></div>
<div class="a ssep" style="left:140px"></div>
<div class="a ssep" style="left:296px"></div>
<div class="a ssep" style="left:1086px"></div>
<svg style="left:148px;top:678px" width="19" height="17" viewBox="0 0 19 17"><path d="M1 8 L10.5 3.4 L17 8.4 L7.2 14.4 Z" fill="#fdfdfe" stroke="#9a9ea6" stroke-width=".7"/><path d="M1 8 L1 9.8 L7.2 16.2 L17 10.6 L17 8.4 L7.2 14.4 Z" fill="#2f5fd0"/><path d="M8.5 11.5 L13.5 8.6" stroke="#a9adb5" stroke-width=".8"/><path d="M7.2 5.4 L10 8.4 L16.4 1.2" fill="none" stroke="#2f62d9" stroke-width="2.1"/></svg>
<div class="a hot" style="left:1091px;top:678px;width:19px;height:22px;background:linear-gradient(#fdebb0,#fbdc80)"></div>
<svg style="left:1095px;top:682px" width="13" height="12" viewBox="0 0 13 12"><rect x=".7" y=".7" width="10.6" height="9.8" fill="#fff" stroke="#3c3c3c" stroke-width="1.3"/><path d="M2.4 3.5h7.2M2.4 5.5h7.2M2.4 7.5h7.2" stroke="#444" stroke-width="1"/><path d="M2.4 9.2h7.2" stroke="#666" stroke-width=".8"/></svg>
<svg style="left:1114px;top:681px" width="12" height="13" viewBox="0 0 12 13"><path d="M5.6 2 Q3 .6 .8 1.6 V10 Q3 9 5.6 10.4 Q8.2 9 10.8 10 V1.6 Q8.2 .6 5.6 2 V10.4" fill="#fff" stroke="#555" stroke-width=".9"/><path d="M2 3.4h2.4M2 5.2h2.4M2 7h2.4M7 3.4h2.4M7 5.2h2.4M7 7h2.4" stroke="#666" stroke-width=".8"/><path d="M4.6 10.6 L5.6 12.6 L6.6 10.6" fill="#555"/></svg>
<svg style="left:1131px;top:681px" width="14" height="14" viewBox="0 0 14 14"><rect x=".7" y="1.6" width="9" height="7.4" fill="#fff" stroke="#555" stroke-width="1.1"/><path d="M2.2 3.6h6M2.2 5.4h6M2.2 7.2h3" stroke="#666" stroke-width=".8"/><circle cx="8.6" cy="8.8" r="3.3" fill="#2b6fd0"/><path d="M6.6 7.6 q1.4 -1.6 3 -.4 q.8 1.8 -.8 3.2 q-2.2 -.4 -2.2 -2.8z" fill="#4fae4a"/><path d="M9.6 10.6 q1.4 -.2 1.8 -1.4" stroke="#8fd070" stroke-width=".8" fill="none"/></svg>
<svg style="left:1150px;top:682px" width="11" height="12" viewBox="0 0 11 12"><path d="M3.4 1.5h6.2M5.6 3.5h4M5.6 5.5h4M3.4 7.5h6.2M3.4 9.5h6.2" stroke="#555" stroke-width="1"/><path d="M.6 1.5h1.2M3 3.5h1.2M3 5.5h1.2M.6 7.5h1.2M.6 9.5h1.2" stroke="#555" stroke-width="1"/></svg>
<svg style="left:1169px;top:682px" width="11" height="12" viewBox="0 0 11 12"><path d="M0 1.5h10.2M0 3.55h10.2M0 5.6h10.2M0 7.65h10.2M0 9.7h10.2" stroke="#555" stroke-width="1"/></svg>
<span class="t" style="left:1193.8px;top:681.9px;font-size:11px;color:#3a3a3a;transform:scaleX(0.977);">111%</span>
<svg style="left:1228px;top:679px" width="17" height="17" viewBox="0 0 17 17"><circle cx="8.3" cy="8.3" r="7.6" fill="#f3f5f8" stroke="#7a7f88" stroke-width="1"/><rect x="4.4" y="7.4" width="8" height="1.8" fill="#444"/></svg>
